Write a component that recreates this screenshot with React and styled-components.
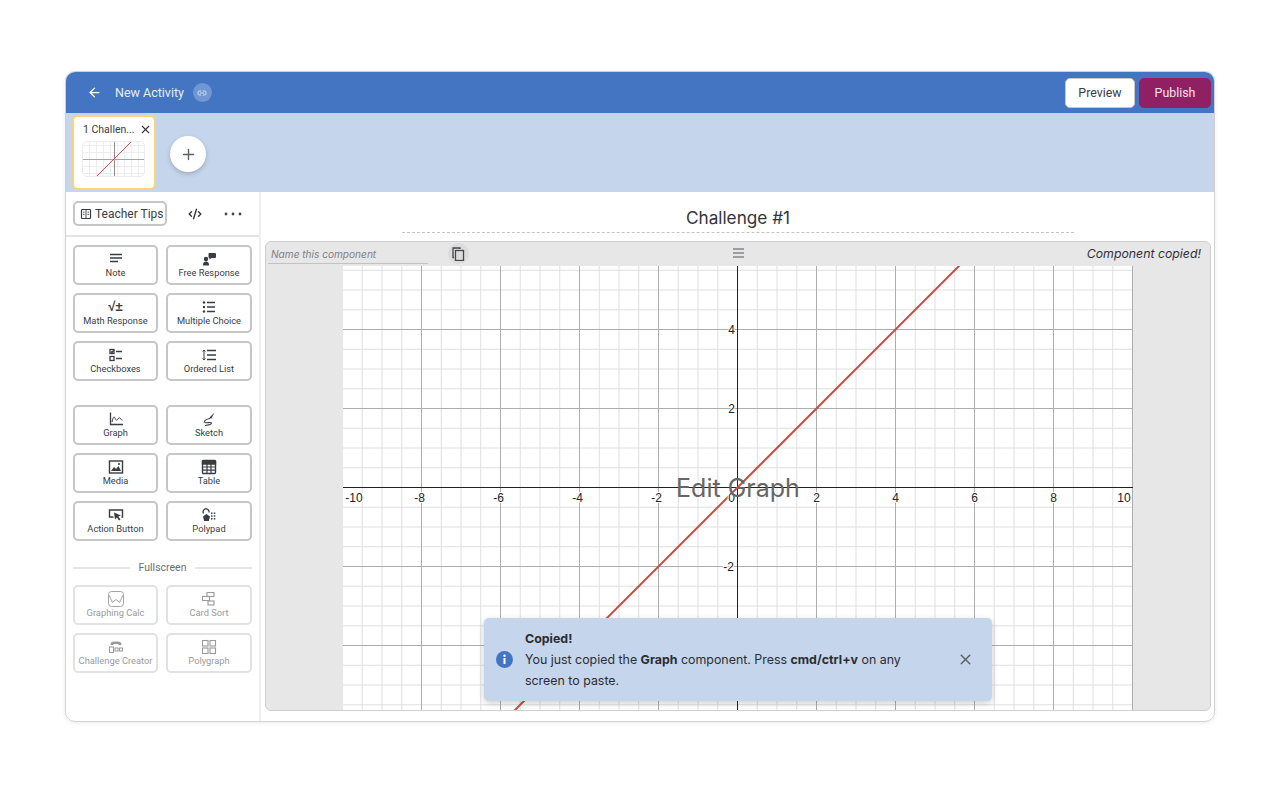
import React from "react";
import styled, { createGlobalStyle } from "styled-components";
import { ArrowLeft, Link2, X, Plus, Code2 } from "lucide-react";

const GlobalStyle = createGlobalStyle`
  html, body { margin: 0; padding: 0; background: #ffffff; }
  body { font-family: Inter, "Noto Sans", sans-serif; color: #3a3c44; }
  * { box-sizing: border-box; }
`;

const smallFont = `Roboto, Inter, sans-serif`;

const Page = styled.div`
  width: 1280px;
  height: 791px;
  padding: 71px 65px 0;
  overflow: hidden;
`;

const Card = styled.div`
  width: 1150px;
  height: 651px;
  border: 1px solid #d2d2d2;
  border-radius: 10px;
  overflow: hidden;
  display: flex;
  flex-direction: column;
  box-shadow: 0 1px 4px rgba(0, 0, 0, 0.08);
`;

const Header = styled.header`
  height: 41px;
  flex: none;
  background: #4475c2;
  display: flex;
  align-items: center;
  padding: 0 3px 0 21px;
  color: #e6edf7;
  font-family: ${smallFont};
`;

const ActivityName = styled.span`
  margin-left: 13px;
  font-size: 12.5px;
`;

const LinkBadge = styled.span`
  margin-left: 9px;
  width: 19px;
  height: 19px;
  border-radius: 50%;
  background: #7097d2;
  display: flex;
  align-items: center;
  justify-content: center;
`;

const HeaderActions = styled.div`
  margin-left: auto;
  display: flex;
  gap: 4px;
`;

const HeaderButton = styled.button`
  height: 30px;
  width: ${(p) => (p.$primary ? "72px" : "70px")};
  font: inherit;
  font-size: 12.4px;
  border-radius: 5px;
  border: ${(p) => (p.$primary ? "1px solid #8f2064" : "1px solid #c8c8c8")};
  background: ${(p) => (p.$primary ? "#8f2064" : "#ffffff")};
  color: ${(p) => (p.$primary ? "#f1e4ed" : "#3a3c44")};
`;

const TabStrip = styled.div`
  height: 79px;
  flex: none;
  background: #c5d5eb;
  display: flex;
  align-items: center;
  padding: 0 0 0 6px;
  gap: 14px;
`;

const Tab = styled.div`
  width: 84px;
  height: 75px;
  margin-bottom: 1px;
  background: #ffffff;
  border: 2px solid #fbd477;
  border-radius: 6px;
  padding: 5px 8px 0 8px;
`;

const TabTitle = styled.div`
  display: flex;
  align-items: center;
  justify-content: space-between;
  font-family: ${smallFont};
  font-size: 10.5px;
  height: 16px;
  margin: 0 -6px 3px 1px;
  white-space: nowrap;
`;

const Thumb = styled.div`
  width: 63px;
  height: 36px;
  border: 1px solid #ececec;
  border-radius: 5px;
  overflow: hidden;
`;

const AddButton = styled.button`
  width: 36px;
  height: 36px;
  margin-top: 3px;
  padding: 0;
  border: none;
  border-radius: 50%;
  background: #ffffff;
  color: #5d5f66;
  display: flex;
  align-items: center;
  justify-content: center;
  box-shadow: 0 2px 5px rgba(0, 0, 0, 0.2);
`;

const Main = styled.div`
  flex: 1;
  min-height: 0;
  display: flex;
`;

const Sidebar = styled.aside`
  width: 195px;
  flex: none;
  border-right: 2px solid #eeeeee;
  display: flex;
  flex-direction: column;
`;

const SideTop = styled.div`
  height: 45px;
  flex: none;
  border-bottom: 2px solid #e4e4e4;
  display: flex;
  align-items: center;
  padding: 0 0 0 7px;
`;

const TipsButton = styled.button`
  width: 94px;
  height: 25px;
  border: 2px solid #c6c6c6;
  border-radius: 5px;
  background: #ffffff;
  font-family: ${smallFont};
  font-size: 12px;
  color: #3a3c44;
  display: flex;
  align-items: center;
  gap: 3px;
  padding: 0 0 0 5px;
  white-space: nowrap;
`;

const IconSlot = styled.span`
  display: flex;
  align-items: center;
  justify-content: center;
  color: #33353c;
  width: 20px;
  margin-left: ${(p) => p.$gap}px;
`;

const Tools = styled.div`
  padding: 8px 0 0 7px;
`;

const ToolGrid = styled.div`
  display: grid;
  grid-template-columns: 85px 86px;
  grid-auto-rows: 40px;
  column-gap: 8px;
  row-gap: 8px;
  margin-bottom: ${(p) => p.$after}px;
`;

const Tool = styled.button`
  border: 2px solid ${(p) => (p.$muted ? "#e2e2e2" : "#c6c6c6")};
  border-radius: 5px;
  background: #ffffff;
  font-family: ${smallFont};
  font-size: 9.3px;
  color: ${(p) => (p.$muted ? "#9a9a9a" : "#3a3c44")};
  display: flex;
  flex-direction: column;
  align-items: center;
  justify-content: flex-start;
  padding: 4px 0 0;
  white-space: nowrap;
  svg { display: block; }
`;

const ToolGlyph = styled.span`
  height: 16px;
  font-size: 13px;
  font-weight: 700;
  line-height: 16px;
  font-family: "Liberation Sans", sans-serif;
`;

const Divider = styled.div`
  width: 179px;
  display: flex;
  align-items: center;
  gap: 9px;
  font-family: ${smallFont};
  font-size: 10.5px;
  color: #6b6d72;
  margin-bottom: 11px;
  &::before, &::after {
    content: "";
    flex: 1;
    height: 2px;
    background: #e6e6e6;
  }
`;

const Content = styled.main`
  flex: 1;
  min-width: 0;
  display: flex;
  flex-direction: column;
  align-items: center;
  padding: 0 3px 10px 4px;
`;

const Title = styled.h1`
  margin: 11px 0 8px;
  width: 672px;
  height: 30px;
  padding-top: 3px;
  font-size: 17.2px;
  font-weight: 400;
  line-height: 24px;
  text-align: center;
  color: #33353c;
  border-bottom: 1px dashed #c4c4c4;
`;

const GraphPanel = styled.section`
  position: relative;
  width: 100%;
  flex: 1;
  min-height: 0;
  background: #e7e7e7;
  border: 1px solid #cfcfcf;
  border-radius: 6px;
  display: flex;
  flex-direction: column;
  overflow: hidden;
`;

const PanelBar = styled.div`
  height: 24px;
  flex: none;
  display: grid;
  grid-template-columns: minmax(0, 1fr) 20px minmax(0, 1fr);
  justify-items: center;
  align-items: center;
  padding: 0 9px 2px;
`;

const NameGroup = styled.div`
  justify-self: start;
  display: flex;
  align-items: center;
  gap: 20px;
  margin: 1px 0 0 -7px;
`;

const NameInput = styled.div`
  width: 160px;
  height: 20px;
  padding: 4px 0 0 3px;
  border-bottom: 1px solid #c2c2c2;
  font-size: 10.1px;
  font-style: italic;
  color: #7d7f84;
`;

const CopyBadge = styled.span`
  width: 21px;
  height: 21px;
  border-radius: 50%;
  background: #dcdcdc;
  display: flex;
  align-items: center;
  justify-content: center;
`;

const CopiedNote = styled.div`
  justify-self: end;
  font-size: 12.3px;
  font-style: italic;
  color: #2f3138;
`;

const GraphArea = styled.div`
  position: relative;
  flex: 1;
  min-height: 0;
  display: flex;
  justify-content: center;
`;

const EditLabel = styled.div`
  position: absolute;
  left: 0;
  right: 0;
  top: 205px;
  text-align: center;
  font-size: 25px;
  line-height: 34px;
  color: #666666;
  pointer-events: none;
`;

const Toast = styled.div`
  position: absolute;
  left: 218px;
  bottom: 9px;
  width: 508px;
  height: 83px;
  background: #c5d5eb;
  border-radius: 5px;
  box-shadow: 0 2px 6px rgba(0, 0, 0, 0.2);
  display: flex;
  align-items: center;
  padding: 0 18px 0 12px;
  font-size: 12.4px;
  line-height: 21px;
  color: #2b2d33;
`;

const ToastText = styled.div`
  width: 385px;
  margin-left: 12px;
  strong { font-weight: 700; }
`;

const ToastClose = styled.span`
  margin-left: auto;
  display: flex;
  color: #5b5d63;
`;

const Ico = ({ children, size = 16 }) => (
  <svg width={size} height={size} viewBox="0 0 16 16" fill="none" stroke="currentColor" strokeWidth="1.3">
    {children}
  </svg>
);

const icons = {
  note: <Ico><path d="M2 3.500h12M2 7h12M2 10.500h8" /></Ico>,
  free: (
    <Ico>
      <circle cx="5" cy="8" r="2.200" fill="currentColor" stroke="none" />
      <path d="M2 14.500c0-3 1-4 3-4s3 1 3 4z" fill="currentColor" stroke="none" />
      <path d="M8 2h6a1 1 0 0 1 1 1v3a1 1 0 0 1-1 1h-3.500L8.500 8.500V7A1 1 0 0 1 7.500 6V3A1 1 0 0 1 8 2z" fill="currentColor" stroke="none" />
    </Ico>
  ),
  multi: (
    <Ico>
      <path d="M6 3.500h8M6 8h8M6 12.500h8" />
      <circle cx="3" cy="3.500" r="1.200" fill="currentColor" stroke="none" />
      <circle cx="3" cy="8" r="1.200" fill="currentColor" stroke="none" />
      <circle cx="3" cy="12.500" r="1.200" fill="currentColor" stroke="none" />
    </Ico>
  ),
  checks: (
    <Ico>
      <rect x="2" y="2.500" width="4" height="4" />
      <rect x="2" y="9.500" width="4" height="4" />
      <path d="M3 4.500l1 1 2-2.500" />
      <path d="M8 4.500h6M8 11.500h6" />
    </Ico>
  ),
  ordered: (
    <Ico>
      <path d="M6 3.500h9M6 8h9M6 12.500h9" strokeWidth="1.500" />
      <path d="M3 3v10M1.700 4.500L3 3l1.300 1.500M1.700 11.500L3 13l1.300-1.500" strokeWidth="1" />
    </Ico>
  ),
  graph: <Ico><path d="M2.500 1.500V13.500H15" /><path d="M4 11c1-5 2-6 3-4s1.500 3 2.500 1.500S11.500 6 12.500 7.500 14 9.500 14.500 9" strokeWidth="1" /></Ico>,
  sketch: <Ico><path d="M13.500 1.500L8.500 6.500 10 8z" fill="currentColor" stroke="none" /><path d="M9 7.500C5 8 2.500 10 4 11.500c1.500 1 6-1 6.500.5s-4 2-6.500 2.500" strokeWidth="1.100" /></Ico>,
  media: (
    <Ico>
      <rect x="1.500" y="2" width="13" height="12" strokeWidth="1.400" />
      <path d="M3 12l3-4 2 2 2.500-3L13 12z" fill="currentColor" stroke="none" />
      <circle cx="11" cy="5" r="1" fill="currentColor" stroke="none" />
    </Ico>
  ),
  table: (
    <Ico>
      <rect x="1.500" y="1.500" width="13" height="13" rx="1" strokeWidth="1.400" />
      <path d="M1.500 2h13v3h-13z" fill="currentColor" />
      <path d="M1.500 8h13M1.500 11.200h13M6 5v9.500M10 5v9.500" strokeWidth="1.200" />
    </Ico>
  ),
  action: (
    <Ico>
      <path d="M5.500 10H1.500V3h13v7h-1" strokeWidth="1.400" />
      <path d="M6 5.500l7 3-2.700 1 2.200 3-1.500 1-2-3-2 2z" fill="currentColor" stroke="none" />
    </Ico>
  ),
  polypad: (
    <Ico>
      <path d="M2.500 6.500a3 3 0 1 1 5.500-1" strokeWidth="1.300" />
      <path d="M5.500 7l3.500 2.500-1.200 4.500H3.200L2 9.500z" fill="currentColor" stroke="none" />
      <path d="M10 5.500h1.500V7H10zM12.800 5.500h1.500V7h-1.500zM10 8.300h1.500v1.500H10zM12.800 8.300h1.500v1.500h-1.500zM10 11h1.500v1.500H10zM12.800 11h1.500v1.500h-1.500z" fill="currentColor" stroke="none" />
    </Ico>
  ),
  calc: (
    <Ico>
      <rect x="0.500" y="0.500" width="15" height="15" rx="3" strokeWidth="0.900" />
      <path d="M1 4l3.500 7.500 3.500-3 3.500 3L15 4" strokeWidth="0.900" />
    </Ico>
  ),
  cards: (
    <Ico>
      <rect x="6" y="1.500" width="7" height="4" strokeWidth="1.100" />
      <rect x="1.500" y="5.500" width="7" height="4" strokeWidth="1.100" />
      <rect x="7" y="10" width="6" height="4" strokeWidth="1.100" />
    </Ico>
  ),
  creator: (
    <Ico>
      <path d="M2.500 6c0-3 1.500-3.500 5.500-3.500s5.500.5 5.500 3.500h-3V5h-5v1z" fill="currentColor" stroke="none" />
      <rect x="1.500" y="8" width="4" height="5.500" strokeWidth="1" />
      <rect x="7" y="9" width="3" height="3" strokeWidth="1" />
      <rect x="11.500" y="9" width="3" height="3" strokeWidth="1" />
    </Ico>
  ),
  polygraph: (
    <Ico>
      <rect x="1.500" y="1.500" width="5.500" height="5.500" strokeWidth="1.100" />
      <rect x="9" y="1.500" width="5.500" height="5.500" strokeWidth="1.100" />
      <rect x="1.500" y="9" width="5.500" height="5.500" strokeWidth="1.100" />
      <rect x="9" y="9" width="5.500" height="5.500" strokeWidth="1.100" />
    </Ico>
  ),
};

const firstTools = [
  ["Note", "note"], ["Free Response", "free"],
  ["Math Response", null], ["Multiple Choice", "multi"],
  ["Checkboxes", "checks"], ["Ordered List", "ordered"],
];
const secondTools = [
  ["Graph", "graph"], ["Sketch", "sketch"],
  ["Media", "media"], ["Table", "table"],
  ["Action Button", "action"], ["Polypad", "polypad"],
];
const fullTools = [
  ["Graphing Calc", "calc"], ["Card Sort", "cards"],
  ["Challenge Creator", "creator"], ["Polygraph", "polygraph"],
];

function ToolButtons({ items, muted }) {
  return items.map(([label, icon]) => (
    <Tool key={label} $muted={muted}>
      {icon ? icons[icon] : <ToolGlyph>√±</ToolGlyph>}
      {label}
    </Tool>
  ));
}

// plot is 790 wide, 39.5px per unit, origin on half pixels so majors stay crisp
const W = 790;
const H = 444;
const UNIT = 39.5;
const OX = 394.5;
const OY = 221.5;

function Plot() {
  const vMinor = [];
  const hMinor = [];
  for (let i = -20; i <= 20; i++) {
    vMinor.push(OX + (i * UNIT) / 2);
    hMinor.push(OY + (i * UNIT) / 2);
  }
  const majors = [-10, -8, -6, -4, -2, 2, 4, 6, 8, 10];
  const yMajors = [-4, -2, 2, 4];
  const labelX = (n) => {
    const x = OX + n * UNIT - (n < 0 ? 2 : 0);
    return Math.min(Math.max(x, 11), W - 9);
  };
  return (
    <svg width={W} height={H} viewBox={`0 0 ${W} ${H}`} style={{ display: "block", background: "#fff" }}>
      {vMinor.map((x) => <line key={x} x1={x} x2={x} y1={0} y2={H} stroke="#dfdfdf" />)}
      {hMinor.map((y) => <line key={y} y1={y} y2={y} x1={0} x2={W} stroke="#dfdfdf" />)}
      {majors.map((n) => <line key={n} x1={OX + n * UNIT} x2={OX + n * UNIT} y1={0} y2={H} stroke="#adadad" />)}
      {yMajors.map((n) => <line key={n} y1={OY - n * UNIT} y2={OY - n * UNIT} x1={0} x2={W} stroke="#adadad" />)}
      <line x1={OX} x2={OX} y1={0} y2={H} stroke="#222" />
      <line y1={OY} y2={OY} x1={0} x2={W} stroke="#222" />
      <line x1={OX - 240} y1={OY + 240} x2={OX + 240} y2={OY - 240} stroke="#c74f45" strokeWidth="2" />
      <g
        fontFamily='"Liberation Sans", sans-serif'
        fontSize="12"
        fill="#222"
        textAnchor="middle"
        stroke="#fff"
        strokeWidth="2"
        paintOrder="stroke"
      >
        {majors.map((n) => (
          <text key={n} x={labelX(n)} y={OY + 14}>{n}</text>
        ))}
        {yMajors.map((n) => (
          <text key={n} x={OX - (n < 0 ? 9 : 6)} y={OY - n * UNIT + 4}>{n}</text>
        ))}
        <text x={OX - 6} y={OY + 14}>0</text>
      </g>
    </svg>
  );
}

function ThumbPlot() {
  const cells = [];
  for (let i = 1; i < 9; i++) cells.push(i * 7);
  return (
    <svg width="61" height="34" viewBox="0 0 61 34" style={{ display: "block" }}>
      {cells.map((x) => <line key={x} x1={x - 0.5} x2={x - 0.5} y1={0} y2={34} stroke="#ededed" />)}
      {[3.5, 10.5, 24.5, 31.5].map((y) => <line key={y} y1={y} y2={y} x1={0} x2={61} stroke="#ededed" />)}
      <line x1={31.5} x2={31.5} y1={0} y2={34} stroke="#8c8c8c" />
      <line y1={17.5} y2={17.5} x1={0} x2={61} stroke="#a4a4a4" />
      <line x1={14} y1={34} x2={48} y2={0} stroke="#dc4b45" />
    </svg>
  );
}

export default function App() {
  return (
    <Page>
      <GlobalStyle />
      <Card>
        <Header>
          <ArrowLeft size={15} color="#ffffff" />
          <ActivityName>New Activity</ActivityName>
          <LinkBadge><Link2 size={10} color="#e6edf7" /></LinkBadge>
          <HeaderActions>
            <HeaderButton>Preview</HeaderButton>
            <HeaderButton $primary>Publish</HeaderButton>
          </HeaderActions>
        </Header>
        <TabStrip>
          <Tab>
            <TabTitle>1 Challen...<X size={13} color="#33353c" /></TabTitle>
            <Thumb><ThumbPlot /></Thumb>
          </Tab>
          <AddButton><Plus size={17} /></AddButton>
        </TabStrip>
        <Main>
          <Sidebar>
            <SideTop>
              <TipsButton>
                <Ico size={12}><rect x="2" y="2" width="12" height="12" rx="1" strokeWidth="1.600" /><path d="M8 2v12M4 5.500h2M4 8.500h2M10 5.500h2M10 8.500h2" strokeWidth="1.200" /></Ico>
                Teacher Tips
              </TipsButton>
              <IconSlot $gap={18}><Code2 size={14} strokeWidth={2.400} /></IconSlot>
              <IconSlot $gap={18}>
                <svg width="18" height="4" viewBox="0 0 18 4"><circle cx="2" cy="2" r="1.400" fill="#44464c" /><circle cx="9" cy="2" r="1.400" fill="#44464c" /><circle cx="16" cy="2" r="1.400" fill="#44464c" /></svg>
              </IconSlot>
            </SideTop>
            <Tools>
              <ToolGrid $after={24}><ToolButtons items={firstTools} /></ToolGrid>
              <ToolGrid $after={20}><ToolButtons items={secondTools} /></ToolGrid>
              <Divider>Fullscreen</Divider>
              <ToolGrid $after={0}><ToolButtons items={fullTools} muted /></ToolGrid>
            </Tools>
          </Sidebar>
          <Content>
            <Title>Challenge #1</Title>
            <GraphPanel>
              <PanelBar>
                <NameGroup>
                  <NameInput>Name this component</NameInput>
                  <CopyBadge>
                    <svg width="13" height="14" viewBox="0 0 13 14" fill="none" stroke="#44464c" strokeWidth="1.300"><path d="M2 10.500H1V1h7v1" /><rect x="3.500" y="3.500" width="8" height="10" /></svg>
                  </CopyBadge>
                </NameGroup>
                <svg width="11" height="10" viewBox="0 0 11 10" fill="none" stroke="#55575c" strokeWidth="1.200"><path d="M0 1h11M0 5h11M0 9h11" /></svg>
                <CopiedNote>Component copied!</CopiedNote>
              </PanelBar>
              <GraphArea>
                <Plot />
                <EditLabel>Edit Graph</EditLabel>
              </GraphArea>
              <Toast>
                <svg width="17" height="17" viewBox="0 0 17 17"><circle cx="8.500" cy="8.500" r="8.500" fill="#4475c2" /><circle cx="8.500" cy="4.800" r="1.200" fill="#fff" /><rect x="7.500" y="7" width="2" height="6" fill="#fff" /></svg>
                <ToastText>
                  <strong>Copied!</strong><br />
                  You just copied the <strong>Graph</strong> component. Press <strong>cmd/ctrl+v</strong> on any screen to paste.
                </ToastText>
                <ToastClose><X size={17} /></ToastClose>
              </Toast>
            </GraphPanel>
          </Content>
        </Main>
      </Card>
    </Page>
  );
}
